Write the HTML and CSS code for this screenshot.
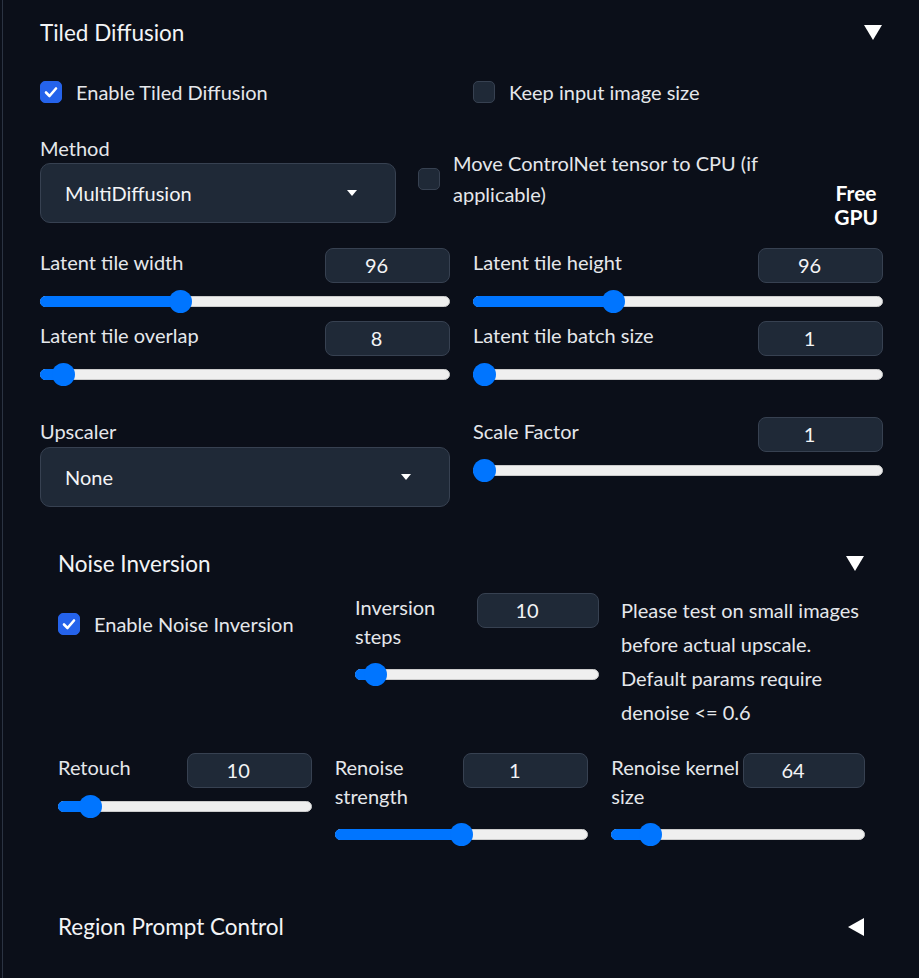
FILE: index.html
```html
<!DOCTYPE html>
<html lang="en">
<head>
<meta charset="UTF-8">
<meta name="viewport" content="width=device-width, initial-scale=1.0">
<title>Tiled Diffusion</title>
<link rel="stylesheet" href="styles.css">
</head>
<body>
<div class="panel">
    <div class="acc-head">
        <span class="acc-title">Tiled Diffusion</span>
        <svg class="caret" width="18" height="16" viewBox="0 0 18 16"><polygon points="0,0 18,0 9,15"/></svg>
    </div>

    <div class="grid2 row-checks">
        <label class="check">
            <span class="box on"><svg width="22" height="22" viewBox="0 0 22 22"><polyline points="6,11.5 9.5,15 16,7.5"/></svg></span>
            <span>Enable Tiled Diffusion</span>
        </label>
        <label class="check">
            <span class="box"></span>
            <span>Keep input image size</span>
        </label>
    </div>

    <div class="row-method">
        <div class="field">
            <div class="field-label">Method</div>
            <div class="dropdown"><span>MultiDiffusion</span><span class="dd-arrow"></span></div>
        </div>
        <label class="check wrap">
            <span class="box"></span>
            <span>Move ControlNet tensor to CPU (if<br>applicable)</span>
        </label>
        <button class="free-gpu">Free<br>GPU</button>
    </div>

    <div class="grid2 sliders">
        <div class="slider">
            <div class="slider-head"><span class="slider-label">Latent tile width</span><span class="num">96</span></div>
            <div class="range" style="--p: 0.333"><div class="range-fill"></div><div class="range-thumb"></div></div>
        </div>
        <div class="slider">
            <div class="slider-head"><span class="slider-label">Latent tile height</span><span class="num">96</span></div>
            <div class="range" style="--p: 0.333"><div class="range-fill"></div><div class="range-thumb"></div></div>
        </div>
        <div class="slider">
            <div class="slider-head"><span class="slider-label">Latent tile overlap</span><span class="num">8</span></div>
            <div class="range" style="--p: 0.031"><div class="range-fill"></div><div class="range-thumb"></div></div>
        </div>
        <div class="slider">
            <div class="slider-head"><span class="slider-label">Latent tile batch size</span><span class="num">1</span></div>
            <div class="range" style="--p: 0"><div class="range-fill"></div><div class="range-thumb"></div></div>
        </div>
    </div>

    <div class="grid2 upscale-row">
        <div class="field">
            <div class="field-label">Upscaler</div>
            <div class="dropdown"><span>None</span><span class="dd-arrow"></span></div>
        </div>
        <div class="slider">
            <div class="slider-head"><span class="slider-label">Scale Factor</span><span class="num">1</span></div>
            <div class="range" style="--p: 0"><div class="range-fill"></div><div class="range-thumb"></div></div>
        </div>
    </div>

    <div class="sub-acc noise">
        <div class="acc-head">
            <span class="acc-title">Noise Inversion</span>
            <svg class="caret" width="18" height="16" viewBox="0 0 18 16"><polygon points="0,0 18,0 9,15"/></svg>
        </div>

        <div class="noise-top">
            <div class="noise-check">
                <label class="check">
                    <span class="box on"><svg width="22" height="22" viewBox="0 0 22 22"><polyline points="6,11.5 9.5,15 16,7.5"/></svg></span>
                    <span>Enable Noise Inversion</span>
                </label>
            </div>
            <div class="slider">
                <div class="slider-head"><span class="slider-label">Inversion<br>steps</span><span class="num narrow">10</span></div>
                <div class="range" style="--p: 0.039"><div class="range-fill"></div><div class="range-thumb"></div></div>
            </div>
            <p class="note">Please test on small images<br>before actual upscale.<br>Default params require<br>denoise &lt;= 0.6</p>
        </div>

        <div class="grid3">
            <div class="slider">
                <div class="slider-head"><span class="slider-label">Retouch</span><span class="num">10</span></div>
                <div class="range" style="--p: 0.089"><div class="range-fill"></div><div class="range-thumb"></div></div>
            </div>
            <div class="slider">
                <div class="slider-head"><span class="slider-label">Renoise<br>strength</span><span class="num">1</span></div>
                <div class="range" style="--p: 0.5"><div class="range-fill"></div><div class="range-thumb"></div></div>
            </div>
            <div class="slider">
                <div class="slider-head tight"><span class="slider-label">Renoise kernel<br>size</span><span class="num narrow">64</span></div>
                <div class="range" style="--p: 0.12"><div class="range-fill"></div><div class="range-thumb"></div></div>
            </div>
        </div>
    </div>

    <div class="sub-acc region">
        <div class="acc-head">
            <span class="acc-title">Region Prompt Control</span>
            <svg class="caret" width="16" height="18" viewBox="0 0 16 18"><polygon points="16,0 16,18 0,9"/></svg>
        </div>
    </div>
</div>
</body>
</html>
```

FILE: styles.css
```css
body {
    margin: 0;
    background-color: #0b0f19;
    color: #e5e7eb;
    font-family: Lato, "Noto Sans", sans-serif;
    font-size: 20px;
}

.panel {
    margin-left: 2px;
    border-left: 1px solid #2b3342;
    padding: 18px 36px 0 37px;
    min-height: 960px;
}

.acc-head {
    display: flex;
    justify-content: space-between;
    align-items: center;
    height: 30px;
}

.acc-title {
    font-size: 22.5px;
    line-height: 30px;
    color: #f3f4f6;
}

.caret {
    fill: #ffffff;
    margin-right: 1px;
}

.grid2 {
    display: grid;
    grid-template-columns: 1fr 1fr;
    column-gap: 23px;
}

.row-checks {
    margin-top: 33px;
}

.check {
    display: flex;
    align-items: center;
    gap: 14px;
    line-height: 22px;
}

.check.wrap {
    gap: 13px;
    line-height: 31px;
}

.box {
    flex-shrink: 0;
    width: 22px;
    height: 22px;
    box-sizing: border-box;
    border: 1px solid #374151;
    border-radius: 5px;
    background-color: #1f2937;
}

.box.on {
    border-color: #2563eb;
    background-color: #2563eb;
}

.box svg {
    display: block;
    margin: -1px;
}

.box polyline {
    fill: none;
    stroke: #ffffff;
    stroke-width: 2.6;
    stroke-linecap: round;
    stroke-linejoin: round;
}

.row-method {
    display: grid;
    grid-template-columns: 356px 1fr auto;
    column-gap: 22px;
    align-items: center;
    margin-top: 31px;
}

.field-label {
    line-height: 29px;
}

.dropdown {
    display: flex;
    justify-content: space-between;
    align-items: center;
    height: 60px;
    box-sizing: border-box;
    padding: 0 38px 0 24px;
    border: 1px solid #374151;
    border-radius: 10px;
    background-color: #1f2937;
    color: #f3f4f6;
}

.upscale-row .dropdown {
    margin-top: 1px;
}

.dd-arrow {
    width: 0;
    height: 0;
    border-left: 5px solid transparent;
    border-right: 5px solid transparent;
    border-top: 6px solid #ffffff;
}

.free-gpu {
    align-self: end;
    margin-bottom: -6px;
    padding: 0 5px;
    border: none;
    background: none;
    color: #ffffff;
    font-family: inherit;
    font-size: 21px;
    font-weight: bold;
    line-height: 24px;
    text-align: center;
}

.sliders {
    margin-top: 25px;
    row-gap: 8px;
}

.upscale-row {
    margin-top: 31px;
}

.slider-head {
    display: flex;
    justify-content: space-between;
    align-items: flex-start;
    gap: 8px;
}

.slider-head.tight {
    gap: 3px;
}

.slider-label {
    line-height: 29px;
    padding-bottom: 5px;
    white-space: nowrap;
}

.num {
    flex-shrink: 0;
    width: 125px;
    height: 35px;
    box-sizing: border-box;
    padding-right: 22px;
    border: 1px solid #374151;
    border-radius: 8px;
    background-color: #1f2937;
    color: #f3f4f6;
    text-align: center;
    line-height: 33px;
}

.num.narrow {
    width: 122px;
}

.range {
    position: relative;
    height: 23px;
    margin-top: 7px;
}

.range::before {
    content: "";
    position: absolute;
    left: 0;
    right: 0;
    top: 6px;
    height: 11px;
    box-sizing: border-box;
    border: 1px solid #cbcbcb;
    border-radius: 6px;
    background-color: #efefef;
}

.range-fill {
    position: absolute;
    left: 0;
    top: 6px;
    height: 11px;
    width: calc(var(--p) * (100% - 23px) + 11.5px);
    border-radius: 6px 0 0 6px;
    background-color: #0075ff;
}

.range-thumb {
    position: absolute;
    top: 0;
    left: calc(var(--p) * (100% - 23px));
    width: 23px;
    height: 23px;
    border-radius: 50%;
    background-color: #0075ff;
}

.sub-acc {
    padding: 0 18px;
}

.noise {
    margin-top: 42px;
}

.noise-top {
    display: grid;
    grid-template-columns: 275px 244px 1fr;
    column-gap: 22px;
    margin-top: 14px;
}

.noise-check {
    padding-top: 20px;
}

.note {
    margin: 0;
    line-height: 34px;
}

.grid3 {
    display: grid;
    grid-template-columns: 1fr 1fr 1fr;
    column-gap: 23px;
    margin-top: 24px;
}

.region {
    margin-top: 66px;
}
```
